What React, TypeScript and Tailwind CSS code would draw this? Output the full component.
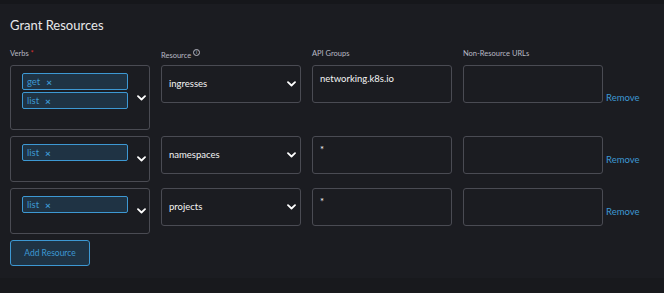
import React from 'react';

type Row = {
    verbs: string[];
    resource: string;
    apiGroup: string;
};

const rows: Row[] = [
    { verbs: ['get', 'list'], resource: 'ingresses', apiGroup: 'networking.k8s.io' },
    { verbs: ['list'], resource: 'namespaces', apiGroup: '*' },
    { verbs: ['list'], resource: 'projects', apiGroup: '*' },
];

const Chevron: React.FC<{ className?: string }> = ({ className }) => (
    <svg className={className} width="9" height="6" viewBox="0 0 9 6" fill="none">
        <path d="M1 1.2l3.5 3.3L8 1.2" stroke="#ffffff" strokeWidth="1.8" strokeLinecap="round" strokeLinejoin="round" />
    </svg>
);

const VerbTag: React.FC<{ label: string }> = ({ label }) => (
    <div className="flex items-center h-[17px] w-[106px] border border-[#3d98d3] bg-[#1f3344] rounded-[2px] pl-[4px] text-[9.5px] text-[#3d98d3] leading-none">
        <span>{label}</span>
        <span className="ml-[6px] text-[10px] font-bold">×</span>
    </div>
);

const App: React.FC = () => {
    return (
        <div className="w-[664px] h-[293px] bg-[#1b1c21] flex flex-col overflow-hidden" style={{ fontFamily: 'Lato, "Liberation Sans", sans-serif' }}>
            <div className="h-[4px] bg-[#16171b]" />
            <div className="flex-1 px-[10px]">
                <h2 className="mt-[12px] text-[13px] leading-[18px] text-[#e8e8ea]">Grant Resources</h2>

                <div className="mt-[13px] grid grid-cols-[140px_140px_140px_140px] gap-x-[11px] text-[7.5px] text-[#b8b9c4] h-[18px]">
                    <div className="pt-[1px]">
                        Verbs <span className="text-[#d32f2f]">*</span>
                    </div>
                    <div className="pt-[3px] flex items-start">
                        Resource
                        <span className="ml-[2px] -mt-[1px] inline-flex items-center justify-center w-[7px] h-[7px] rounded-full border border-[#b8b9c4] text-[5px] leading-none">i</span>
                    </div>
                    <div className="pt-[1px]">API Groups</div>
                    <div className="pt-[1px]">Non-Resource URLs</div>
                </div>

                <div className="flex flex-col gap-[6px]">
                    {rows.map((row, i) => (
                        <div key={i} className="flex items-center">
                            <div className="grid grid-cols-[140px_140px_140px_140px] gap-x-[11px] items-start">
                                <div className="relative border border-[#4a4b53] rounded-[3px] pt-[7px] pb-[20px] pl-[11px] flex flex-col gap-[2px]">
                                    {row.verbs.map((v) => (
                                        <VerbTag key={v} label={v} />
                                    ))}
                                    <div className="absolute right-[3px] inset-y-0 flex items-center">
                                        <Chevron />
                                    </div>
                                </div>
                                <div className="h-[38px] border border-[#4a4b53] rounded-[3px] flex items-center justify-between pl-[7px] pr-[4px] text-[9.5px] text-[#f4f4f4]">
                                    <span>{row.resource}</span>
                                    <Chevron />
                                </div>
                                <div className="h-[38px] border border-[#4a4b53] rounded-[3px] px-[7px] pt-[7px] text-[9.5px] text-[#f4f4f4] leading-[12px]">
                                    {row.apiGroup}
                                </div>
                                <div className="h-[38px] border border-[#4a4b53] rounded-[3px]" />
                            </div>
                            <span className="ml-[3px] text-[9.5px] text-[#3d98d3] pt-[2px]">Remove</span>
                        </div>
                    ))}
                </div>

                <button className="mt-[6px] w-[80px] h-[26px] border border-[#3d98d3] bg-[#1f3344] rounded-[3px] text-[8.5px] text-[#3d98d3] leading-none">
                    Add Resource
                </button>
            </div>
            <div className="h-[15px] bg-[#18191d]" />
        </div>
    );
};

export default App;
